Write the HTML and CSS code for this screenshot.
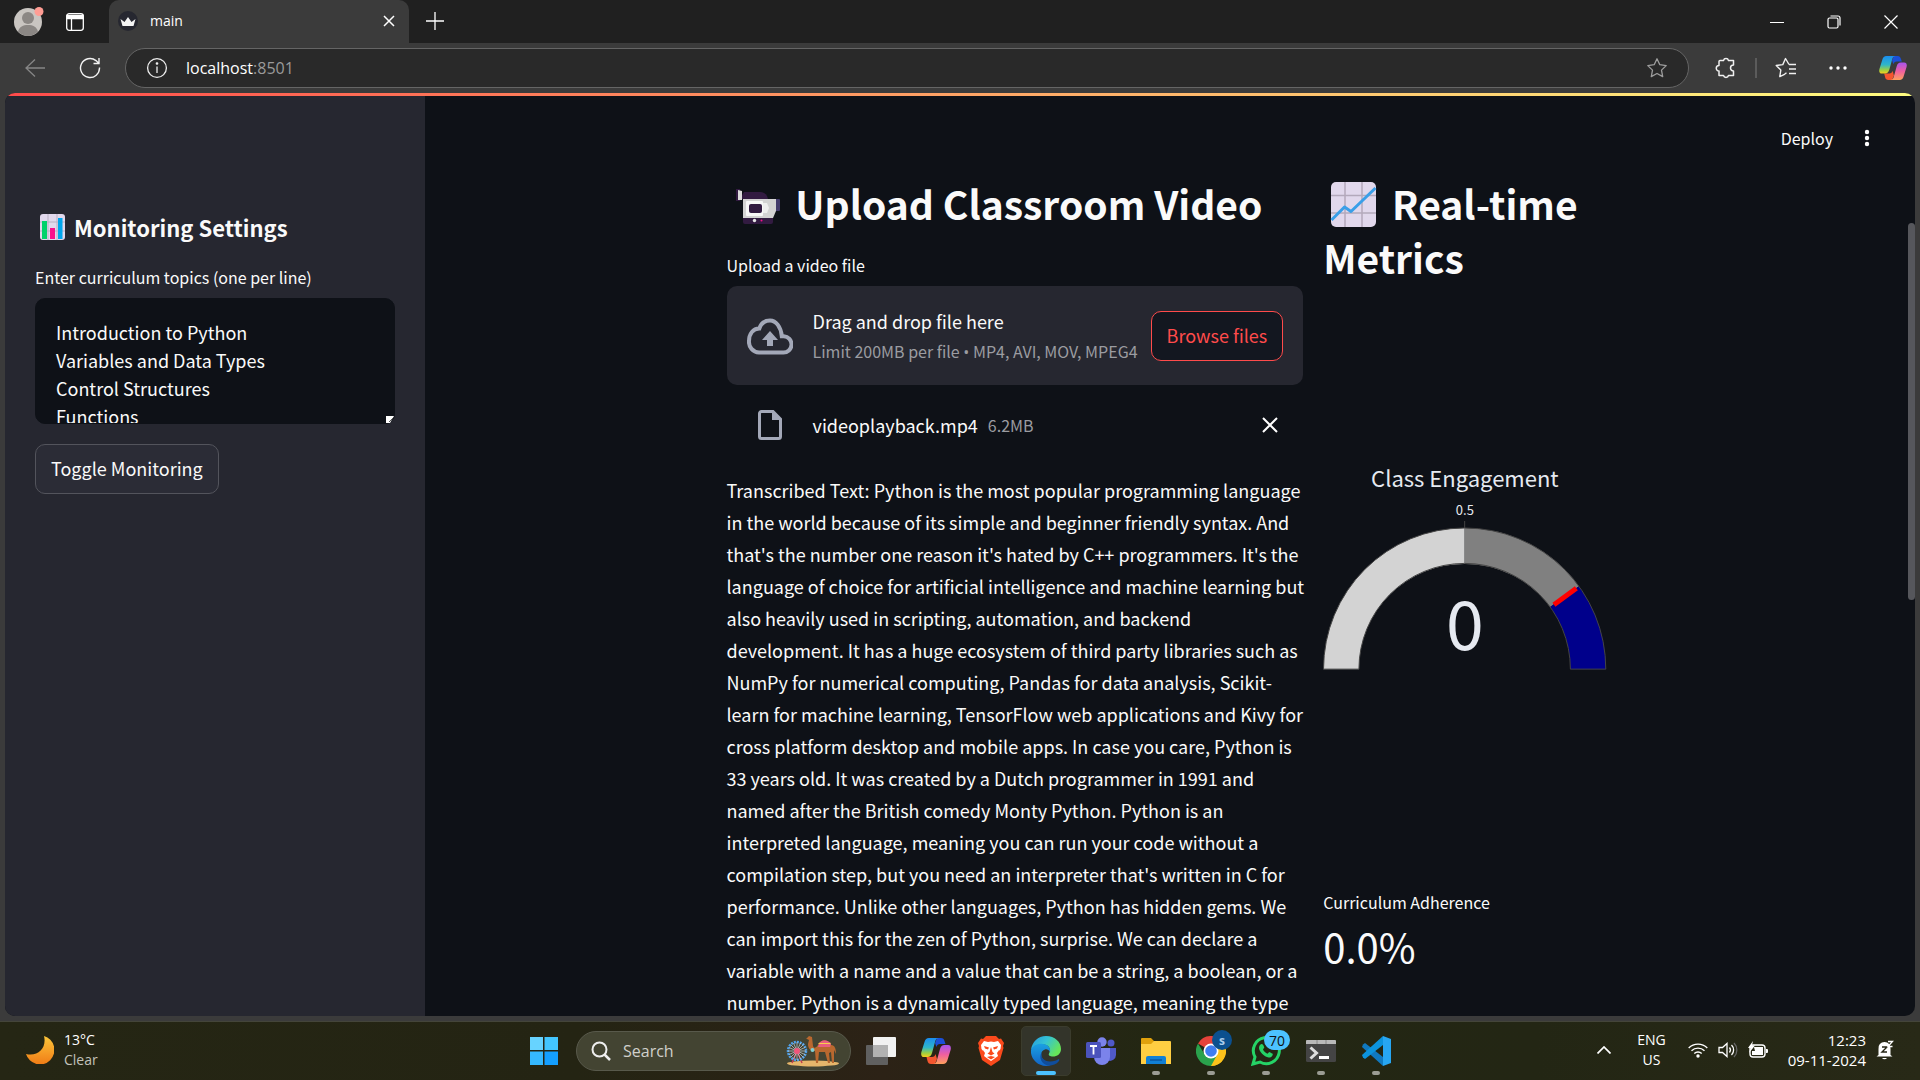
FILE: index.html
```html
<!DOCTYPE html>
<html lang="en">
<head>
    <meta charset="UTF-8">
    <meta name="viewport" content="width=device-width, initial-scale=1.0">
    <title>main</title>
    <link rel="stylesheet" href="styles.css">
</head>
<body>
    <!-- shared artwork -->
    <svg class="defs" aria-hidden="true">
        <defs>
            <linearGradient id="cp-a" x1="0" y1="0" x2="0" y2="1">
                <stop offset="0" stop-color="#1a8df0"/><stop offset=".5" stop-color="#2fb6c8"/><stop offset=".8" stop-color="#9fd040"/><stop offset="1" stop-color="#f7cf1d"/>
            </linearGradient>
            <linearGradient id="cp-b" x1="0" y1="0" x2="0" y2="1">
                <stop offset="0" stop-color="#a554f0"/><stop offset=".5" stop-color="#ef5fa0"/><stop offset="1" stop-color="#ffa05c"/>
            </linearGradient>
            <symbol id="copilot" viewBox="0 0 30 28">
                <path d="M16 1h4c2 0 3 1.200 3.500 3L24.500 7H19c-2 0-3 1-3.600 3L14 6z" fill="#1b4fd8"/>
                <path d="M14 27h-4c-2 0-3-1.200-3.500-3L5.500 20H11c2 0 3-1 3.600-3L16 22z" fill="#f4562f"/>
                <path d="M8 1h10c-2 0-3 1-3.700 3L11 16c-.8 2.600-2 4-4.500 4H3c-2.500 0-3.300-2-2.600-5L3.500 5C4.300 2.300 5.500 1 8 1z" fill="url(#cp-a)"/>
                <path d="M22 27H12c2 0 3-1 3.700-3L19 12c.8-2.600 2-4 4.500-4H27c2.500 0 3.300 2 2.600 5l-3.100 10c-.8 2.700-2 4-4.500 4z" fill="url(#cp-b)"/>
            </symbol>
        </defs>
    </svg>

    <header class="tabstrip">
        <button class="icon-btn profile" aria-label="Profile">
            <svg width="32" height="32" viewBox="0 0 32 32">
                <circle cx="15" cy="16" r="14" fill="#c9c5c1"/>
                <circle cx="15" cy="12" r="6" fill="#8b8784"/>
                <path d="M5 25.500c1.500-5 5-6.500 10-6.500s8.500 1.500 10 6.500A14 14 0 0 1 15 30a14 14 0 0 1-10-4.500z" fill="#8b8784"/>
                <circle cx="26" cy="5.500" r="4.500" fill="#ff9d94"/>
            </svg>
        </button>
        <button class="icon-btn workspace" aria-label="Tab actions">
            <svg width="20" height="20" viewBox="0 0 20 20" fill="none" stroke="#fff" stroke-width="1.300">
                <rect x="1.700" y="1.700" width="16.600" height="16.600" rx="2.500"/>
                <path d="M2 3.500h16v3H2z" fill="#fff"/><path d="M6.500 6v12"/>
            </svg>
        </button>
        <div class="tab">
            <svg width="20" height="20" viewBox="0 0 20 20">
                <circle cx="10" cy="10" r="10" fill="#262730"/>
                <path d="M2.500 8l4 3L10 6l3.500 5 4-3-2 7h-11z" fill="#f4f4f4"/>
            </svg>
            <span class="tab-title">main</span>
            <button class="icon-btn" aria-label="Close tab">
                <svg width="12" height="12" viewBox="0 0 12 12" stroke="#fff" stroke-width="1.500"><path d="M1 1l10 10M11 1L1 11"/></svg>
            </button>
        </div>
        <button class="icon-btn new-tab" aria-label="New tab">
            <svg width="18" height="18" viewBox="0 0 18 18" stroke="#fff" stroke-width="1.300"><path d="M9 0v18M0 9h18"/></svg>
        </button>
        <div class="window-controls">
            <button class="icon-btn" aria-label="Minimize"><svg width="14" height="14" viewBox="0 0 14 14" stroke="#fff"><path d="M0 7.500h14"/></svg></button>
            <button class="icon-btn" aria-label="Restore"><svg width="14" height="14" viewBox="0 0 14 14" fill="none" stroke="#fff" stroke-width="1.200"><rect x="1" y="3" width="10" height="10" rx="1.500"/><path d="M3.500 1H11a2 2 0 0 1 2 2v7.500"/></svg></button>
            <button class="icon-btn" aria-label="Close"><svg width="14" height="14" viewBox="0 0 14 14" stroke="#fff" stroke-width="1.200"><path d="M.5.500l13 13M13.500.500l-13 13"/></svg></button>
        </div>
    </header>

    <nav class="toolbar">
        <button class="icon-btn" aria-label="Back">
            <svg width="20" height="18" viewBox="0 0 20 18" fill="none" stroke="#868686" stroke-width="1.300"><path d="M20 9H1M10 .5L1 9l9 8.500"/></svg>
        </button>
        <button class="icon-btn" aria-label="Refresh">
            <svg width="22" height="22" viewBox="0 0 22 22" fill="none" stroke="#f2f2f2" stroke-width="1.400"><path d="M20.500 10.500A9.500 9.500 0 1 1 17 3.600L20 6.500M20 1v5.500h-5.500"/></svg>
        </button>
        <div class="address">
            <svg width="22" height="22" viewBox="0 0 22 22" fill="none" stroke="#eee" stroke-width="1.300"><circle cx="11" cy="11" r="9.400"/><path d="M11 9.500V16"/><circle cx="11" cy="6.500" r=".7" fill="#eee"/></svg>
            <span class="url">localhost<span class="port">:8501</span></span>
            <button class="icon-btn" aria-label="Add to favorites">
                <svg width="22" height="22" viewBox="0 0 22 22" fill="none" stroke="#9d9d9d" stroke-width="1.300" stroke-linejoin="round"><path d="M11 1.800l2.800 5.900 6.400.9-4.700 4.500 1.200 6.500-5.700-3.100-5.700 3.100 1.200-6.500L1.800 8.600l6.400-.9z"/></svg>
            </button>
        </div>
        <div class="tools">
            <button class="icon-btn" aria-label="Extensions">
                <svg width="22" height="22" viewBox="0 0 22 22" fill="none" stroke="#f0f0f0" stroke-width="1.500" stroke-linejoin="round"><path d="M5 3.500h3.500a2.600 2.600 0 0 1 5 0H18.500V8a2.500 2.500 0 0 0 0 6v4.500h-5a2.600 2.600 0 0 1-5 0H4V14a2.600 2.600 0 0 1 0-5.500V4.500a1 1 0 0 1 1-1z"/></svg>
            </button>
            <span class="divider"></span>
            <button class="icon-btn" aria-label="Favorites">
                <svg width="22" height="22" viewBox="0 0 22 22" fill="none" stroke="#f0f0f0" stroke-width="1.400" stroke-linejoin="round"><path d="M14 7.500L10.500 1.500 7.800 7.600l-6.600.9 4.600 4.600-1 6.500 4.700-2.300 2-1.600M14 7.500h7M14 12h7M14 16.500h7"/></svg>
            </button>
            <button class="icon-btn" aria-label="More">
                <svg width="18" height="4" viewBox="0 0 18 4" fill="#fff"><circle cx="2" cy="2" r="1.700"/><circle cx="9" cy="2" r="1.700"/><circle cx="16" cy="2" r="1.700"/></svg>
            </button>
            <button class="icon-btn copilot-btn" aria-label="Copilot"><svg width="28" height="26"><use href="#copilot"/></svg></button>
        </div>
    </nav>

    <div class="viewport">
        <div class="app">
            <aside class="sidebar">
                <h2>
                    <svg class="emoji" width="34" height="26" viewBox="0 0 34 26">
                        <rect x="5" width="25" height="26" rx="3" fill="#e1d8ec"/>
                        <path d="M13 0v26M22 0v26M5 8h25M5 17h25" stroke="#b9b0c2"/>
                        <path d="M7 7h5v18H7z" fill="#00d26a"/><path d="M15 14h5v11h-5z" fill="#f8108c"/><path d="M23 4h4.500v21H23z" fill="#00a6ed"/>
                    </svg>
                    Monitoring Settings
                </h2>
                <label for="topics">Enter curriculum topics (one per line)</label>
                <div class="textarea-wrap">
                    <textarea id="topics">Introduction to Python
Variables and Data Types
Control Structures
Functions</textarea>
                    <svg class="grip" width="8" height="7" viewBox="0 0 8 7"><path d="M0 0h8L4 7H0z" fill="#fff"/><path d="M3 6l4-4" stroke="#555"/></svg>
                </div>
                <button class="btn">Toggle Monitoring</button>
            </aside>

            <main class="main">
                <div class="app-header">
                    <button class="deploy">Deploy</button>
                    <button class="icon-btn kebab" aria-label="Main menu">
                        <svg width="6" height="18" viewBox="0 0 6 18" fill="#fff"><circle cx="3" cy="3" r="2.200"/><circle cx="3" cy="9" r="2.200"/><circle cx="3" cy="15" r="2.200"/></svg>
                    </button>
                </div>

                <div class="columns">
                    <section class="col-video">
                        <h1>
                            <svg class="emoji" width="60" height="45" viewBox="0 0 60 45">
                                <path d="M14 15l3-5h16c4 0 7 2 8 7H15z" fill="#321b41"/>
                                <path d="M9 7h4v12H9z" fill="#321b41"/><path d="M11 8l4 1v9h-4z" fill="#dcdcdc"/>
                                <rect x="47" y="17" width="6" height="12" rx="1" fill="#433b6b"/>
                                <path d="M16 17h33v12l-3 7H16z" fill="#d3d3d3"/>
                                <rect x="19" y="19" width="17" height="15" rx="1" fill="#f7f7f7"/>
                                <rect x="22" y="22" width="13" height="9" rx="2" fill="#321b41"/>
                                <path d="M36 21h4l2 5-2 5h-4z" fill="#eee"/>
                                <path d="M16 36h30v4a2 2 0 0 1-2 2H18a2 2 0 0 1-2-2z" fill="#321b41"/>
                                <circle cx="27.500" cy="38.500" r="1.700" fill="#e6e6e6"/><circle cx="34.500" cy="38.500" r="1" fill="#f8108c"/>
                            </svg>
                            Upload Classroom Video
                        </h1>
                        <label class="upload-label" for="file">Upload a video file</label>
                        <div class="dropzone">
                            <svg width="46" height="38" viewBox="0 0 46 38" fill="none" stroke="#a3a8b8" stroke-width="4">
                                <path d="M12 35.500h24a8 8 0 0 0 .8-16.200h-2C34 10 29 3.500 23 3.500c-5 0-9 3-10.700 8C6 11.500 2 17 2 24a10.500 10.500 0 0 0 10 11.500z"/>
                                <path d="M23 14l-8 9h5v6h6v-6h5z" fill="#a3a8b8" stroke="none"/>
                            </svg>
                            <div class="drop-text">
                                <div>Drag and drop file here</div>
                                <small>Limit 200MB per file <span class="bullet">•</span> MP4, AVI, MOV, MPEG4</small>
                            </div>
                            <button class="btn btn-browse" id="file">Browse files</button>
                        </div>
                        <div class="file-row">
                            <svg width="24" height="30" viewBox="0 0 24 30" fill="none" stroke="#a3a8b8" stroke-width="3"><path d="M3.500 1.500H15L22.500 9v17.500a2 2 0 0 1-2 2h-17a2 2 0 0 1-2-2v-23a2 2 0 0 1 2-2z"/><path d="M14 1l9 9h-9z" fill="#a3a8b8" stroke="none"/></svg>
                            <span class="file-name">videoplayback.mp4</span>
                            <small>6.2MB</small>
                            <button class="icon-btn" aria-label="Remove file">
                                <svg width="16" height="16" viewBox="0 0 16 16" stroke="#fff" stroke-width="2"><path d="M1 1l14 14M15 1L1 15"/></svg>
                            </button>
                        </div>
                        <p class="transcript">Transcribed Text: Python is the most popular programming language in the world because of its simple and beginner friendly syntax. And that's the number one reason it's hated by C++ programmers. It's the language of choice for artificial intelligence and machine learning but also heavily used in scripting, automation, and backend development. It has a huge ecosystem of third party libraries such as NumPy for numerical computing, Pandas for data analysis, Scikit-learn for machine learning, TensorFlow web applications and Kivy for cross platform desktop and mobile apps. In case you care, Python is 33 years old. It was created by a Dutch programmer in 1991 and named after the British comedy Monty Python. Python is an interpreted language, meaning you can run your code without a compilation step, but you need an interpreter that's written in C for performance. Unlike other languages, Python has hidden gems. We can import this for the zen of Python, surprise. We can declare a variable with a name and a value that can be a string, a boolean, or a number. Python is a dynamically typed language, meaning the type</p>
                    </section>

                    <section class="col-metrics">
                        <h1>
                            <svg class="emoji" width="60" height="45" viewBox="0 0 60 45">
                                <rect x="8" width="45" height="45" rx="5" fill="#e1d8ec"/>
                                <path d="M22 0v45M39 0v45M8 13.500h45M8 31h45" stroke="#b3a9bb" stroke-width="1.500"/>
                                <path d="M8.500 38L21.500 25l6.500 4.500L52.500 6" fill="none" stroke="#3a9fe8" stroke-width="3" stroke-linejoin="round"/>
                            </svg>
                            Real-time Metrics
                        </h1>
                        <div class="gauge">
                            <div class="gauge-title">Class Engagement</div>
                            <div class="gauge-tick">0.5</div>
                            <svg viewBox="0 0 284 150">
                                <path d="M142 0v7" stroke="#444"/>
                                <path d="M.5 148.500A141.500 141.500 0 0 1 142 7v36A105.500 105.500 0 0 0 36 148.500z" fill="#d3d3d3"/>
                                <path d="M142 7A141.500 141.500 0 0 1 256.500 65.300L227.700 86.300A106 106 0 0 0 142 43z" fill="#808080"/>
                                <path d="M256.500 65.300A141.500 141.500 0 0 1 283.500 148.500H248A106 106 0 0 0 227.700 86.300z" fill="#00008b"/>
                                <path d="M.5 148.500A141.500 141.500 0 0 1 283.500 148.500H248A106 106 0 0 0 36 148.500z" fill="none" stroke="#444"/>
                                <path d="M231.500 84L254 67.500" stroke="#f00" stroke-width="5"/>
                            </svg>
                            <div class="gauge-value">0</div>
                        </div>
                        <div class="metric">
                            <div class="metric-label">Curriculum Adherence</div>
                            <div class="metric-value">0.0%</div>
                        </div>
                    </section>
                </div>
            </main>
            <div class="scroll-thumb"></div>
        </div>
    </div>

    <footer class="taskbar">
        <div class="weather">
            <svg width="28" height="28" viewBox="0 0 28 28">
                <defs><linearGradient id="moon" x1="0" y1="0" x2="0" y2="1"><stop offset="0" stop-color="#fcc63a"/><stop offset="1" stop-color="#f07c16"/></linearGradient></defs>
                <path d="M18 0A14.500 14.500 0 1 1 0 18C12 21 21 12 18 0z" fill="url(#moon)"/>
            </svg>
            <div><div>13°C</div><div class="muted">Clear</div></div>
        </div>

        <div class="dock">
            <button class="dock-item" aria-label="Start">
                <svg width="30" height="30" viewBox="0 0 30 30"><path d="M1 1h13v13H1z" fill="#67d3ff"/><path d="M15.500 1H29v13H15.500z" fill="#43c6ff"/><path d="M1 15.500h13V29H1z" fill="#35b8ff"/><path d="M15.500 15.500H29V29H15.500z" fill="#149fff"/></svg>
            </button>
            <div class="search">
                <svg width="20" height="20" viewBox="0 0 20 20" fill="none" stroke="#eee" stroke-width="2"><circle cx="8.500" cy="8.500" r="7"/><path d="M13.500 13.500L19 19" stroke-width="2.500"/></svg>
                <input type="text" placeholder="Search" aria-label="Search">
                <svg width="54" height="32" viewBox="0 0 54 32">
                    <ellipse cx="27" cy="28.500" rx="26" ry="3" fill="#e6b66b"/>
                    <path d="M6 28l5-12 5 12" fill="none" stroke="#c23d50" stroke-width="1.500"/>
                    <circle cx="11" cy="16" r="9" fill="none" stroke="#4fa0e8" stroke-width="2.500" stroke-dasharray="2 1"/>
                    <path d="M11 7v18M2 16h18M4.600 9.600l12.800 12.800M17.400 9.600L4.600 22.400M7.500 8l7 16M14.500 8l-7 16M3 12.500l16 7M3 19.500l16-7" stroke="#c9d4df" stroke-width=".7"/>
                    <circle cx="11" cy="16" r="3" fill="#f0567a"/>
                    <path d="M20 4l3-3 3 1 1 9c1 3 3 2 5-1 2-6 10-6 13 0 4 0 5 4 5 9l-2-4v13h-2l-1-11-2 1 1 10h-2l-3-11h-6l-1 11h-2l-1-12c-5 0-7-3-7-7l1-4-2-1z" fill="#b9682f"/>
                    <path d="M33 9c2-5 9-5 12 0l-1 3H32z" fill="#e95f7d"/><path d="M32.500 8.500h12" stroke="#f5d04c"/>
                    <circle cx="26.500" cy="15" r="2" fill="#7fd0d5"/>
                </svg>
            </div>
            <button class="dock-item" aria-label="Task view">
                <svg width="30" height="28" viewBox="0 0 30 28"><rect y="8" width="22" height="20" rx="1" fill="#606060"/><rect x="7" width="23" height="20" rx="1" fill="#f2f2f2"/><path d="M7 8h15v12H7z" fill="#b2b2b2"/></svg>
            </button>
            <button class="dock-item" aria-label="Copilot"><svg width="30" height="28"><use href="#copilot"/></svg></button>
            <button class="dock-item" aria-label="Brave">
                <svg width="26" height="30" viewBox="0 0 26 30">
                    <path d="M8 0h10l3 3 2-.5L26 7l-1 3 .5 2-3.500 12-9 6-9-6L.5 12 1 10 0 7l3-4.500L5 3z" fill="#fb4a1c"/>
                    <path d="M6 5l4 1 3-.5 3 .5 4-1 3 4-.5 4-2.500 3v4l-4 3-3 2-3-2-4-3v-4l-2.500-3L3 9z" fill="#fff"/>
                    <path d="M6 10l5 1.500-1 2-3-1zM20 10l-5 1.500 1 2 3-1zM13 11l1.500 5 2 1.500-3.500 2-3.500-2 2-1.500zM9 21l4-1 4 1-4 2.500zM5 14l2 3-1 3M21 14l-2 3 1 3" fill="#fb4a1c"/>
                </svg>
            </button>
            <button class="dock-item active" aria-label="Edge">
                <svg width="30" height="30" viewBox="0 0 30 30">
                    <defs>
                        <linearGradient id="edge-a" x1="0" y1="0" x2="1" y2=".5"><stop offset="0" stop-color="#2398e0"/><stop offset=".5" stop-color="#35c3d4"/><stop offset="1" stop-color="#66e45a"/></linearGradient>
                        <linearGradient id="edge-b" x1="0" y1="0" x2="0" y2="1"><stop offset="0" stop-color="#1ba1e2"/><stop offset="1" stop-color="#1263c6"/></linearGradient>
                    </defs>
                    <path d="M0 14C1 6 7 0 15 0c9 0 15 6 15 13 0 5-4 7.500-8 7.500-3 0-5-1-4-3 2-3 1-9-6-9-5 0-10 2-12 5.500z" fill="url(#edge-a)"/>
                    <path d="M0 14c2-5 7-7 12-6 5 .5 8 4 7 8-1-2-3-3-5-2.500-4 1-5 6-2 10 2.500 3.500 6 5.500 9 5-2 1-4 1.500-6 1.500C6 30-1 22 0 14z" fill="url(#edge-b)"/>
                    <path d="M11 16c-2 5 2 9.500 8 9.500 4 0 7-1 8.500-2.500 1 0 1 1 .5 2-3 4-8 5-11 4.500-6-1-10-8-6-13.500z" fill="#104d9c"/>
                </svg>
            </button>
            <button class="dock-item" aria-label="Teams">
                <svg width="30" height="28" viewBox="0 0 30 28">
                    <circle cx="25" cy="6" r="3.500" fill="#5059c9"/><path d="M20 11h10v7a6 6 0 0 1-8 5.500z" fill="#5059c9"/>
                    <circle cx="16" cy="5" r="4.700" fill="#7b83eb"/><path d="M8 11h16v9a8 8 0 0 1-16 0z" fill="#7b83eb"/>
                    <rect y="5" width="15" height="16" rx="1.500" fill="#4b53bc"/>
                    <path d="M4 9h7M7.500 9v8.500" stroke="#fff" stroke-width="1.800"/>
                </svg>
            </button>
            <button class="dock-item running" aria-label="File Explorer">
                <svg width="30" height="28" viewBox="0 0 30 28"><path d="M0 2a1 1 0 0 1 1-1h9l3 3h15v6H0z" fill="#e0a10c"/><path d="M0 7h10l3-3h16a1 1 0 0 1 1 1v22H0z" fill="#ffce42"/><path d="M5 27v-6a2 2 0 0 1 2-2h16a2 2 0 0 1 2 2v6z" fill="#1180d5"/><path d="M9 23h12" stroke="#0a56a0" stroke-width="1.500"/></svg>
            </button>
            <button class="dock-item running" aria-label="Chrome">
                <svg width="30" height="30" viewBox="0 0 30 30"><path d="M15 15L2 7.500A15 15 0 0 1 28 7.500z" fill="#e5423a"/><path d="M15 15l13-7.500A15 15 0 0 1 15 30z" fill="#fcc21b"/><path d="M15 8h13a15 15 0 0 1-13 22l6-11z" fill="#fcc21b"/><path d="M2 7.500A15 15 0 0 0 15 30l6-11-12 0z" fill="#2aa24c"/><circle cx="15" cy="15" r="7.500" fill="#fff"/><circle cx="15" cy="15" r="5.800" fill="#3f7df0"/></svg>
                <span class="badge badge-user">s</span>
            </button>
            <button class="dock-item running" aria-label="WhatsApp">
                <svg width="30" height="30" viewBox="0 0 30 30"><path d="M2 28l2-7a13 13 0 1 1 5 5z" fill="none" stroke="#25d366" stroke-width="3"/><path d="M9 9c1.500-2 3-1 3.500.5l.8 2-1.300 2c1 2 2.500 3.500 4.500 4.300l1.700-1.800 3.500 1.700c.5 2-1.500 4-4 3.800C13 21 8 15 8 12c0-1 .5-2.500 1-3z" fill="#25d366"/></svg>
                <span class="badge badge-count">70</span>
            </button>
            <button class="dock-item running" aria-label="Terminal">
                <svg width="30" height="24" viewBox="0 0 30 24"><rect y="1" width="30" height="22" rx="1.500" fill="#444"/><path d="M0 5V2a1 1 0 0 1 1-1h28a1 1 0 0 1 1 1v3z" fill="#b9b9b9"/><path d="M11 1v4M20 1v4" stroke="#888"/><path d="M4.500 8.500l6 5.500-6 5.500" fill="none" stroke="#ddd" stroke-width="3"/><path d="M13 18.500h10" stroke="#fff" stroke-width="3"/></svg>
            </button>
            <button class="dock-item running" aria-label="VS Code">
                <svg width="30" height="30" viewBox="0 0 30 30"><path d="M2 8.500l2-1.500L22 21v9L1 11z" fill="#1079c0"/><path d="M2 21.500L4 23 22 9V0L1 19z" fill="#0c93dd"/><path d="M22 0l8 3v24l-8 3z" fill="#27a6f2"/></svg>
            </button>
        </div>

        <div class="tray">
            <svg width="14" height="8" viewBox="0 0 14 8" fill="none" stroke="#fff" stroke-width="1.700"><path d="M.5 7.500L7 1l6.500 6.500"/></svg>
            <div class="lang">ENG<br>US</div>
            <div class="status">
                <svg width="20" height="16" viewBox="0 0 20 16" fill="none" stroke="#fff" stroke-width="1.400"><path d="M.7 6a13.200 13.200 0 0 1 18.600 0M3.500 8.800a9.200 9.200 0 0 1 13 0M6.300 11.500a5.300 5.300 0 0 1 7.400 0"/><circle cx="10" cy="14" r="1.700" fill="#fff" stroke="none"/></svg>
                <svg width="20" height="16" viewBox="0 0 20 16" fill="none" stroke="#fff" stroke-width="1.300"><path d="M1 5.500h3.500L9 1.500v13l-4.500-4H1zM11.500 5.500a4 4 0 0 1 0 5M13.500 3a7 7 0 0 1 0 10"/><path d="M16 1a10 10 0 0 1 0 14" stroke="#666"/></svg>
                <svg width="20" height="18" viewBox="0 0 20 18"><rect x="2" y="4" width="15" height="12" rx="3" fill="none" stroke="#fff" stroke-width="1.400"/><path d="M6 6h9v8H4v-4h3z" fill="#fff"/><path d="M18 8h1a1 1 0 0 1 1 1v2a1 1 0 0 1-1 1h-1z" fill="#fff"/><path d="M5 0L0 7h2.500L1 12l6-7.500H4z" fill="#fff"/></svg>
            </div>
            <div class="clock">12:23<br>09-11-2024</div>
            <svg width="18" height="20" viewBox="0 0 18 20"><path d="M2.500 15V9a6 6 0 0 1 6-7c4 0 6 3 6 7v6l2 1.500H.5z" fill="#fff"/><path d="M6 18a3 3 0 0 0 5 0z" fill="#fff"/><path d="M6 7h5l-5 5h5" fill="none" stroke="#252514" stroke-width="1.400"/><path d="M12 1.500h4.500l-4.500 5h4.500" fill="none" stroke="#fff" stroke-width="1.300"/></svg>
        </div>
    </footer>
</body>
</html>
```
FILE: styles.css
```css
* {
    box-sizing: border-box;
}
body {
    margin: 0;
    height: 100vh;
    display: flex;
    flex-direction: column;
    overflow: hidden;
    background-color: #3b3b3b;
    color: #fff;
    font-family: "Open Sans", "Noto Sans", sans-serif;
    font-size: 14px;
}
button {
    font-family: inherit;
    color: inherit;
    cursor: pointer;
}
svg {
    flex-shrink: 0;
}
.defs {
    position: absolute;
    width: 0;
    height: 0;
}
.icon-btn {
    display: flex;
    align-items: center;
    justify-content: center;
    padding: 0;
    border: none;
    background: none;
}

/* browser tabs */
.tabstrip {
    display: flex;
    align-items: center;
    height: 43px;
    background-color: #202020;
}
.profile {
    margin-left: 13px;
}
.workspace {
    margin: 0 24px 0 20px;
}
.tab {
    display: flex;
    align-items: center;
    align-self: stretch;
    width: 300px;
    padding: 0 14px 2px 9px;
    border-radius: 10px 10px 0 0;
    background-color: #3b3b3b;
}
.tab-title {
    flex: 1;
    margin-left: 12px;
}
.new-tab {
    margin-left: 17px;
    padding-bottom: 2px;
}
.window-controls {
    display: flex;
    margin: 0 1px 0 auto;
}
.window-controls .icon-btn {
    width: 57px;
    height: 43px;
}

/* address bar */
.toolbar {
    display: flex;
    align-items: center;
    height: 50px;
    padding: 0 13px 0 25px;
}
.toolbar > .icon-btn {
    margin-right: 34px;
}
.toolbar > .icon-btn + .icon-btn {
    margin-right: 24px;
}
.address {
    flex: 1;
    display: flex;
    align-items: center;
    height: 40px;
    padding: 0 20px;
    border: 1px solid #656565;
    border-radius: 20px;
    background-color: #292929;
}
.url {
    flex: 1;
    margin-left: 18px;
    font-size: 16px;
}
.port {
    color: #9a9a9a;
}
.tools {
    display: flex;
    align-items: center;
    gap: 18px;
    margin-left: 26px;
}
.divider {
    width: 2px;
    height: 20px;
    background-color: #5b5b5b;
}
.tools .icon-btn + .icon-btn {
    margin-left: 14px;
}

/* streamlit app */
.viewport {
    flex: 1;
    min-height: 0;
    padding: 0 5px 5px;
}
.app {
    position: relative;
    display: flex;
    height: 100%;
    overflow: hidden;
    border-radius: 10px;
    background-color: #0e1117;
    color: #fafafa;
    font-family: "Noto Sans CJK SC", "Open Sans", sans-serif;
    font-size: 18px;
}
.app::before {
    content: "";
    position: absolute;
    top: 0;
    left: 0;
    right: 0;
    height: 3px;
    background-image: linear-gradient(90deg, #ff4b4b, #fffd80);
}
.sidebar {
    width: 420px;
    padding: 119px 30px 0;
    background-color: #262730;
}
.sidebar h2 {
    display: flex;
    align-items: center;
    gap: 5px;
    margin: 0;
    font-size: 22px;
    line-height: 30px;
}
label {
    display: block;
    font-size: 16px;
    line-height: 24px;
}
.sidebar label {
    margin: 23px 0 9px;
}
.textarea-wrap {
    position: relative;
}
textarea {
    display: block;
    width: 100%;
    height: 126px;
    padding: 19px 20px;
    border: 1px solid #0e1117;
    border-radius: 10px;
    overflow: hidden;
    resize: none;
    background-color: #0e1117;
    color: #fafafa;
    font-family: inherit;
    font-size: 18px;
    line-height: 28px;
}
.grip {
    position: absolute;
    right: 1px;
    bottom: 1px;
}
.btn {
    height: 50px;
    padding: 0 15px 2px;
    border: 1px solid #53545c;
    border-radius: 10px;
    background-color: #2b2c36;
    font-size: 18px;
}
.sidebar .btn {
    margin-top: 20px;
}

.main {
    flex: 1;
    min-width: 0;
    padding-right: 7px;
}
.app-header {
    display: flex;
    align-items: center;
    justify-content: flex-end;
    gap: 31px;
    height: 83px;
    padding: 6px 38px 0 0;
}
.deploy {
    padding: 0;
    border: none;
    background: none;
    font-size: 16px;
}
.columns {
    display: flex;
    gap: 20px;
    max-width: 880px;
    margin: 0 auto;
}
.col-video {
    flex: 1 1 calc(66.67% - 10px);
    min-width: 0;
}
.col-metrics {
    flex: 1 1 calc(33.33% - 10px);
    min-width: 0;
}
h1 {
    margin: 0;
    font-size: 39px;
    line-height: 54px;
}
h1 .emoji {
    vertical-align: -7px;
}
.upload-label {
    margin: 23px 0 9px;
}
.dropzone {
    display: flex;
    align-items: center;
    padding: 20px;
    height: 99px;
    border-radius: 10px;
    background-color: #262730;
}
.drop-text {
    flex: 1;
    margin-left: 20px;
    padding-top: 2px;
    line-height: 30px;
    white-space: nowrap;
}
.drop-text small {
    display: block;
}
small {
    font-size: 16px;
    color: #9b9ca1;
}
.bullet {
    font-family: "Open Sans", sans-serif;
}
.btn-browse {
    border-color: #ff4b4b;
    background-color: #131720;
    color: #ff4b4b;
}
.file-row {
    display: flex;
    align-items: center;
    height: 80px;
    padding: 0 25px 0 31px;
}
.file-name {
    margin: 0 10px 0 31px;
}
.file-row .icon-btn {
    margin-left: auto;
}
.transcript {
    margin: 9px -4px 0 0;
    line-height: 32px;
}
.gauge {
    position: relative;
    margin-top: 177px;
    text-align: center;
    color: #e6eaf1;
}
.gauge-title {
    font-size: 22px;
    line-height: 32px;
}
.gauge-tick {
    margin: 9px 0 3px;
    font-size: 13px;
    line-height: 16px;
}
.gauge svg {
    display: block;
    width: 100%;
}
.gauge-value {
    position: absolute;
    left: 0;
    right: 0;
    bottom: 10px;
    font-size: 68px;
    line-height: 80px;
}
.metric {
    margin-top: 219px;
}
.metric-label {
    font-size: 16px;
    line-height: 24px;
}
.metric-value {
    font-size: 40px;
    line-height: 64px;
}
.scroll-thumb {
    position: absolute;
    top: 130px;
    right: 0;
    width: 7px;
    height: 377px;
    border-radius: 4px;
    background-color: #56575c;
}

/* windows taskbar */
.taskbar {
    display: grid;
    grid-template-columns: 1fr auto 1fr;
    align-items: center;
    height: 59px;
    border-top: 1px solid #44453a;
    background-image: linear-gradient(90deg, #252614, #242413 30%, #2c2216 46%, #232713 60%, #232614 80%, #282917);
    font-size: 14px;
    line-height: 20px;
}
.weather {
    display: flex;
    align-items: center;
    gap: 10px;
    padding: 0 0 2px 26px;
}
.muted {
    color: #c2c2ba;
}
.dock {
    display: flex;
    align-items: center;
    gap: 5px;
}
.dock-item {
    position: relative;
    display: flex;
    align-items: center;
    justify-content: center;
    width: 50px;
    height: 50px;
    padding: 0;
    border: 1px solid transparent;
    border-radius: 5px;
    background: none;
}
.dock-item.active {
    border-color: #3b3c2d;
    background-color: #33342a;
}
.dock-item.running::after,
.dock-item.active::after {
    content: "";
    position: absolute;
    bottom: 0;
    width: 8px;
    height: 4px;
    border-radius: 2px;
    background-color: #9b9c94;
}
.dock-item.active::after {
    width: 20px;
    background-color: #4cc2ff;
}
.search {
    display: flex;
    align-items: center;
    width: 275px;
    height: 40px;
    margin-left: 2px;
    padding: 0 10px 0 14px;
    border: 1px solid #58594b;
    border-radius: 20px;
    background-color: #434432;
}
.search input {
    flex: 1;
    min-width: 0;
    padding: 0 12px;
    border: none;
    outline: none;
    background: none;
    color: #fff;
    font-family: inherit;
    font-size: 16px;
}
.search input::placeholder {
    color: #d0d0cb;
}
.badge {
    position: absolute;
    top: 3px;
    display: flex;
    align-items: center;
    justify-content: center;
    height: 20px;
    border-radius: 10px;
}
.badge-user {
    right: 3px;
    width: 20px;
    background-color: #0b508f;
    color: #a9cdec;
    font-size: 12px;
    font-weight: bold;
}
.badge-count {
    right: 0;
    width: 26px;
    background-color: #4cc2ff;
    color: #111;
    font-size: 14px;
}
.tray {
    display: flex;
    align-items: center;
    justify-content: flex-end;
    padding: 0 26px 2px 0;
}
.lang {
    margin: 0 22px 0 26px;
    text-align: center;
}
.status {
    display: flex;
    align-items: center;
    gap: 10px;
}
.clock {
    margin: 0 10px 0 20px;
    font-size: 15px;
    text-align: right;
}
```
